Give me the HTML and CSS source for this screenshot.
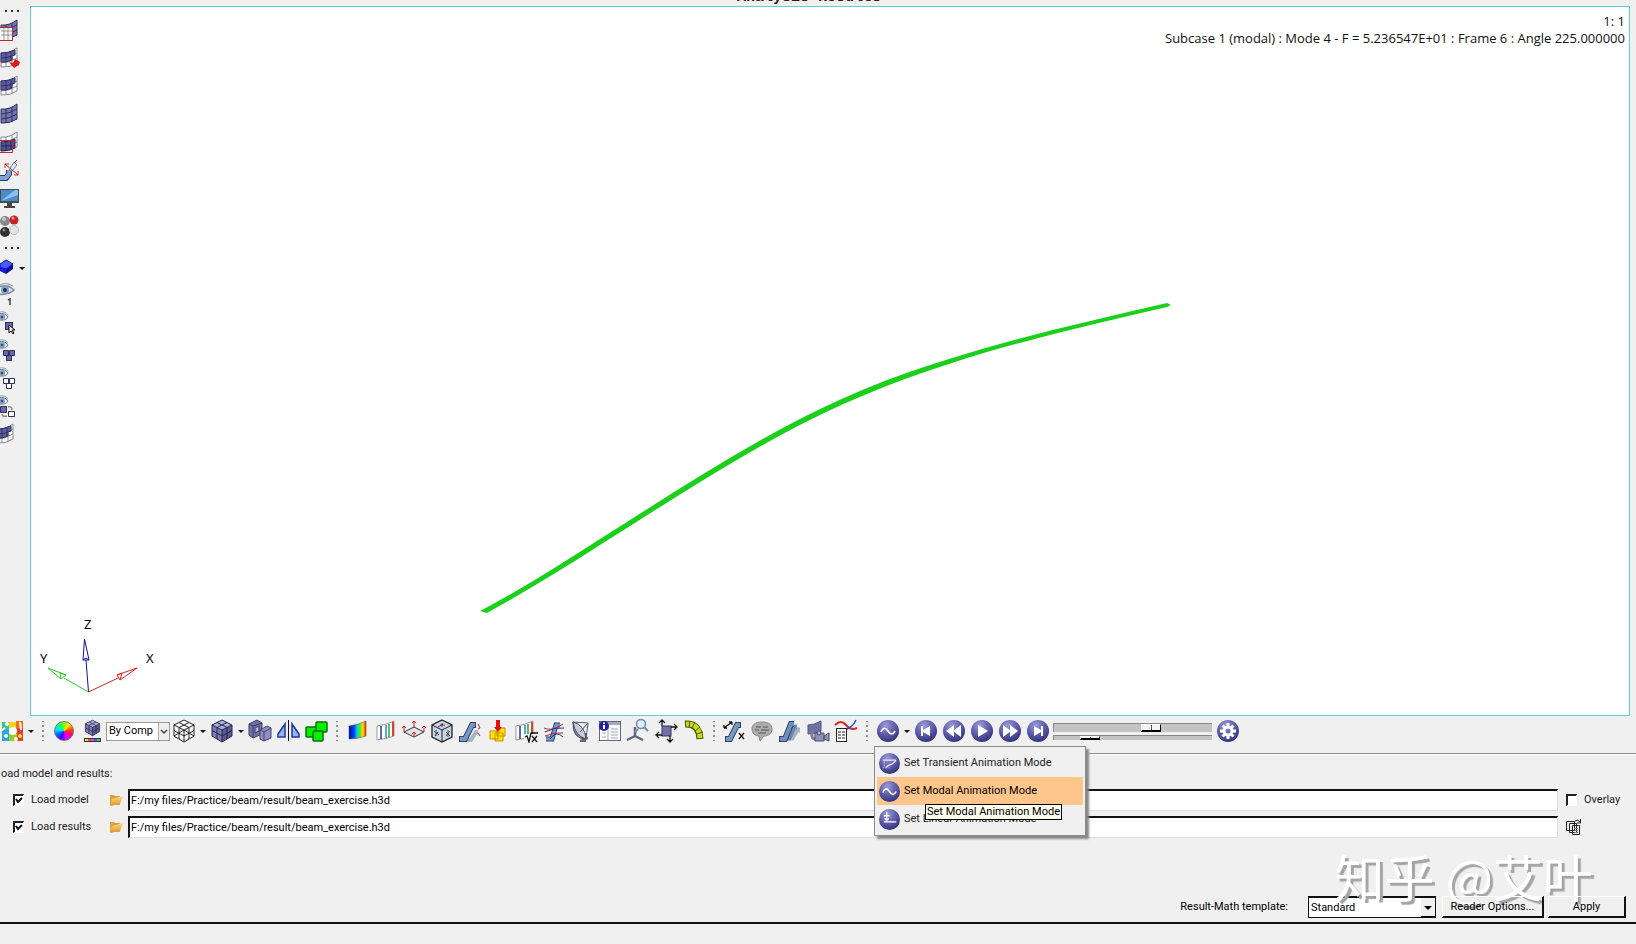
FILE: index.html
```html
<!DOCTYPE html>
<html lang="en">
<head>
<meta charset="utf-8">
<title>Analysis Results</title>
<link rel="stylesheet" href="styles.css">
</head>
<body>
<svg class="sprite" aria-hidden="true">
  <defs>
    <radialGradient id="orb" cx=".4" cy=".25" r=".8"><stop offset="0" stop-color="#9c9cd6"/><stop offset=".5" stop-color="#5f5fae"/><stop offset="1" stop-color="#2e2e76"/></radialGradient>
    <linearGradient id="rainbow" x1="0" x2="1"><stop offset="0" stop-color="#0010a0"/><stop offset=".3" stop-color="#0040ff"/><stop offset=".48" stop-color="#00d8e0"/><stop offset=".64" stop-color="#50e820"/><stop offset=".82" stop-color="#ffe000"/><stop offset="1" stop-color="#f02000"/></linearGradient>
    <linearGradient id="folder" x1="0" y1="0" x2="0" y2="1"><stop offset="0" stop-color="#ffe08a"/><stop offset="1" stop-color="#d99420"/></linearGradient>
  </defs>
  <symbol id="mesh-fill" viewBox="0 0 24 24"><path d="M1 7Q9 8 17 2V17Q9 22 1 21Z" fill="#7474b4" stroke="#30305c"/><path d="M1 12Q9 12 17 7M1 17Q9 17 17 12M6 7V21M12 5V20" fill="none" stroke="#30305c"/></symbol>
  <symbol id="mesh-open" viewBox="0 0 24 24"><path d="M1 7Q9 8 17 2V17Q9 22 1 21Z" fill="#fafafa" stroke="#8a8a94"/><path d="M1 12Q9 12 17 7M1 17Q9 17 17 12M6 7V21M12 5V20" fill="none" stroke="#8a8a94"/></symbol>
  <symbol id="mesh-part" viewBox="0 0 24 24"><use href="#mesh-open"/><path d="M1 7Q8 7 15 4V9L12 10V14L6 16H1Z" fill="#5c5ca4" stroke="#30305c"/><path d="M1 12Q8 12 12 10M6 7V16M11 6V14" fill="none" stroke="#30305c"/></symbol>
  <symbol id="mesh-red-a" viewBox="0 0 24 24"><use href="#mesh-fill"/><path d="M0 10H12V22H0Z" fill="#f6f6f6"/><path d="M1 13H12M1 17H12M4 10V22M8 10V22" stroke="#999"/><path d="M0 9.500H12.500V22.500H0" fill="none" stroke="#c8202c"/></symbol>
  <symbol id="mesh-red-b" viewBox="0 0 24 24"><use href="#mesh-open"/><path d="M1 12Q9 12 15 9V18Q9 21 1 21Z" fill="#505098" stroke="#282850"/><path d="M1 16H15M6 12V21M11 11V20" stroke="#282850"/><path d="M0 10.500H12.500V22.500H0" fill="none" stroke="#d02038"/></symbol>
  <symbol id="mesh-arrow" viewBox="0 0 24 24"><use href="#mesh-part"/><path d="M9 16L13 17 15 13 20 16 19 19 14 22Z" fill="#e01818"/></symbol>
  <symbol id="pipe-red" viewBox="0 0 24 24"><path d="M0 20H6L9 16V12" fill="none" stroke="#28446c" stroke-width="6"/><path d="M0 20H6L9 16V12" fill="none" stroke="#7fa4d0" stroke-width="4"/><path d="M9 12L14 4 17 7 12 13Z" fill="#d8ecfa" stroke="#6c8298"/><path d="M5 6L18 17M5 6H9M5 6V10M18 17H14M18 17V13M14 5L17 2" fill="none" stroke="#d02020"/></symbol>
  <symbol id="monitor" viewBox="0 0 24 24"><rect x="0" y="3" width="19" height="14" fill="#444c58"/><rect x="1" y="4" width="17" height="11" fill="#4b8cc8"/><path d="M1 15L15 4H18V9Z" fill="#8dc0ec"/><path d="M7 17H12V20H15V22H4V20H7Z" fill="#444"/></symbol>
  <symbol id="balls" viewBox="0 0 24 24"><circle cx="5" cy="7" r="5" fill="#888"/><circle cx="14" cy="6" r="4.500" fill="#c82028"/><circle cx="5" cy="18" r="5" fill="#303030"/><circle cx="14" cy="16" r="4.500" fill="#e4e4e4" stroke="#bbb"/><circle cx="13" cy="4" r="1.500" fill="#ff9898"/><circle cx="4" cy="5" r="2" fill="#c4c4c4"/><circle cx="4" cy="16" r="1.500" fill="#888"/></symbol>
  <symbol id="bluebox" viewBox="0 0 24 24"><path d="M0 8L6 4 13 8 6 13 0 11Z" fill="#4a5cff" stroke="#1010a0"/><path d="M0 11V15L6 18V13Z" fill="#1a1ad8"/><path d="M6 13L13 8V13L6 18Z" fill="#0c0c9c"/></symbol>
  <symbol id="eye" viewBox="0 0 24 24"><path d="M-6 10Q4 0 14 9Q6 16 -6 12Z" fill="#e8eef4" stroke="#7b8794" stroke-width="1.500"/><circle cx="5" cy="9" r="4" fill="#7ba2c8"/><circle cx="5" cy="9" r="2" fill="#203048"/><path d="M-2 5Q5 0 13 5" fill="none" stroke="#8a949e"/></symbol>
  <symbol id="eye-one" viewBox="0 0 24 24"><use href="#eye" y="-1"/><path d="M8 18L10 17V23" fill="none" stroke="#444" stroke-width="1.500"/></symbol>
  <symbol id="eye-small" viewBox="0 0 24 24"><path d="M-2 4Q5 2 8 7Q6 11 -1 10" fill="#e8eef4" stroke="#6f7b88"/><circle cx="2" cy="7" r="3" fill="#7f9fc0"/><circle cx="2" cy="7" r="1" fill="#203048"/><path d="M-1 2Q6 1 8 5" fill="none" stroke="#98a2ac"/></symbol>
  <symbol id="eye-pick" viewBox="0 0 24 24"><use href="#eye-small"/><rect x="5.500" y="12.500" width="7" height="7" fill="#6868a8" stroke="#303060"/><path d="M9 15V23L11 21 13 24 14 23 12 20H15Z" fill="#fff" stroke="#000"/></symbol>
  <symbol id="eye-full" viewBox="0 0 24 24"><use href="#eye-small"/><path d="M3.500 12.500h5v5h-5zM9.500 12.500h5v5h-5zM6.500 17.500h5v5h-5z" fill="#6868a8" stroke="#303060"/></symbol>
  <symbol id="eye-empty" viewBox="0 0 24 24"><use href="#eye-small"/><path d="M3.500 12.500h5v5h-5zM9.500 12.500h5v5h-5zM6.500 17.500h5v5h-5z" fill="#fff" stroke="#303060"/></symbol>
  <symbol id="eye-swap" viewBox="0 0 24 24"><use href="#eye-small"/><path d="M.500 12.500h6v6h-6z" fill="#6868a8" stroke="#303060"/><path d="M8.500 17.500h6v5h-6z" fill="#fff" stroke="#303060"/><path d="M8 13Q12 12 12 16M2 20Q2 23 7 22" fill="none" stroke="#888" stroke-width="1.500"/></symbol>
  <symbol id="confetti" viewBox="0 0 24 24"><path d="M1 3H8V10H1Z" fill="#3cc878"/><path d="M8 3H15V9H8Z" fill="#f0d020"/><path d="M15 2H22V9H15Z" fill="#f07018"/><path d="M1 10H8V22H1Z" fill="#28a8e8"/><path d="M15 9H22V22H15Z" fill="#e84028"/><path d="M8 15H16V22H8Z" fill="#98d020"/><circle cx="12" cy="12" r="4" fill="#fff"/><circle cx="6" cy="5" r="2" fill="#fff"/><circle cx="19" cy="17" r="2" fill="#ffe040"/><circle cx="5" cy="17" r="2" fill="#fff"/><circle cx="15" cy="20" r="2" fill="#fff"/><path d="M0 12L4 9M19 3L20 11" stroke="#fff" stroke-width="2"/></symbol>
  <symbol id="cube" viewBox="0 0 24 24"><path d="M12 1L22 6V17L12 23 2 17V6Z" fill="#5a5a90"/><path d="M12 1L22 6 12 11 2 6Z" fill="#b0b0d4"/><path d="M2 6L12 11V23L2 17Z" fill="#7c7cb4"/><path d="M12 1L22 6V17L12 23 2 17V6ZM2 6L12 11 22 6M12 11V23M7 3.500L17 8.500V20M17 3.500L7 8.500V20M2 11.500L12 17 22 11.500" fill="none" stroke="#26264c"/></symbol>
  <symbol id="cube-wire" viewBox="0 0 24 24"><path d="M12 1L22 6V17L12 23 2 17V6Z" fill="#fff"/><path d="M12 1L22 6V17L12 23 2 17V6ZM2 6L12 11 22 6M12 11V23M7 3.500L17 8.500V20M17 3.500L7 8.500V20M2 11.500L12 17 22 11.500M2 17L12 11 22 17" fill="none" stroke="#222"/></symbol>
  <symbol id="cube-bar" viewBox="0 0 24 24"><svg x="4" y="0" width="17" height="18"><use href="#cube" width="17" height="18"/></svg><rect x="4" y="19" width="17" height="4" fill="#333"/><path d="M5 20h3v2H5z" fill="#f0e020"/><path d="M8 20h3v2H8z" fill="#ff4040"/><path d="M11 20h3v2h-3z" fill="#e040e0"/><path d="M14 20h3v2h-3z" fill="#4060ff"/><path d="M17 20h3v2h-3z" fill="#30d060"/></symbol>
  <symbol id="blocks" viewBox="0 0 24 24"><path d="M1 5L9 1 14 4V15L5 19 1 16Z" fill="#7272a8" stroke="#3a3a66"/><path d="M1 5L5 7 14 4M5 7V19" fill="none" stroke="#3a3a66"/><path d="M7 9L11 7V12L7 14Z" fill="#b8b8d8" stroke="#3a3a66"/><path d="M12 11L19 7 23 9V19L16 22 12 20Z" fill="#8e8ec0" stroke="#44446e"/><path d="M12 11L16 13 23 9M16 13V22" fill="none" stroke="#44446e"/></symbol>
  <symbol id="mirror" viewBox="0 0 24 24"><path d="M12.500 1V22" stroke="#111"/><path d="M9 5V18H2V15Z" fill="#94b4ec" stroke="#1c38a0" stroke-width="1.500"/><path d="M16 5V18H23V15Z" fill="#94b4ec" stroke="#1c38a0" stroke-width="1.500"/></symbol>
  <symbol id="green" viewBox="0 0 24 24"><g fill="#00f000" stroke="#087008" stroke-width="1.500"><rect x="2" y="8" width="11" height="10" rx="1"/><rect x="12" y="3" width="11" height="10" rx="1"/><rect x="9" y="12" width="10" height="10" rx="1"/></g></symbol>
  <symbol id="contour" viewBox="0 0 24 24"><path d="M3 7Q12 6 20 2V17Q12 20 3 20Z" fill="url(#rainbow)" stroke="#404040" stroke-width=".5"/></symbol>
  <symbol id="strips" viewBox="0 0 24 24"><path d="M3 7Q12 6 20 2V17Q12 20 3 21Z" fill="#fff" stroke="#999"/><path d="M7 7V20" stroke="#2038a0" stroke-width="1.500"/><path d="M12 6V19" stroke="#2890b0" stroke-width="1.500"/><path d="M15 5V18" stroke="#30a040" stroke-width="1.500"/><path d="M19 3V17" stroke="#e04030" stroke-width="2"/></symbol>
  <symbol id="plane" viewBox="0 0 24 24"><path d="M2 13L12 8 22 13 12 18Z" fill="#e4e4e4" stroke="#333"/><path d="M12 8V2M10 4L12 2 14 4M2 13V7M0 9L2 7 4 9M22 13V7M20 9L22 7 24 9M12 18V13M10 15L12 13 14 15" fill="none" stroke="#d02020"/></symbol>
  <symbol id="tensor" viewBox="0 0 24 24"><path d="M12 1L22 6V18L12 23 2 18V6Z" fill="#c8d4e8" stroke="#222" stroke-width="1.300"/><path d="M2 6L12 11 22 6M12 11V23" fill="none" stroke="#222"/><path d="M10 6H15M12 4V8M4 12L9 16M16 17L20 12" stroke="#d02020"/><path d="M8 8L13 5M5 17L8 13M16 13L20 17" stroke="#1830c0"/><path d="M6 11V17M18 11V18" stroke="#188030"/></symbol>
  <symbol id="pipe-deform" viewBox="0 0 24 24"><path d="M8 21H13L18 13H20" fill="none" stroke="#a8b4c4" stroke-width="4"/><path d="M1 20H7L14 6H18" fill="none" stroke="#2c446c" stroke-width="6"/><path d="M2 20H7L14 6H17" fill="none" stroke="#7898c0" stroke-width="4"/><path d="M20 5L22 9 20 10M20 14L22 17" fill="none" stroke="#d02020"/></symbol>
  <symbol id="load" viewBox="0 0 24 24"><path d="M4 12H12V20H4ZM11 9H19V17H11ZM9 14H17V22H9Z" fill="#ffe600" stroke="#c88c00"/><path d="M10 1H14V8H16L12 13 8 8H10Z" fill="#e01010"/></symbol>
  <symbol id="strips-x" viewBox="0 0 24 24"><use href="#strips" x="-1"/><path d="M10 15H24V24H10Z" fill="#f0f0f0"/><path d="M11 18L13 17 15 23 17 14H24" fill="none" stroke="#111" stroke-width="1.300"/><path d="M18 17L23 23M23 17L18 23" stroke="#111" stroke-width="1.300"/></symbol>
  <symbol id="flow" viewBox="0 0 24 24"><path d="M4 20H10L14 6H18" fill="none" stroke="#2c446c" stroke-width="5"/><path d="M4 20H10L14 6H18" fill="none" stroke="#7898c0" stroke-width="3"/><path d="M2 9Q10 13 21 5M3 17Q12 13 21 14" fill="none" stroke="#d02020"/><path d="M3 13Q12 8 22 9M8 20Q14 11 21 18" fill="none" stroke="#1838b0"/></symbol>
  <symbol id="dish" viewBox="0 0 24 24"><path d="M16 14L15 22H10L18 19" fill="none" stroke="#667" stroke-width="2"/><path d="M3 3Q2 20 16 20Z" fill="#8890a4" stroke="#444c60"/><path d="M3 3Q15 6 16 20Q5 17 3 3Z" fill="#c8ccd8" stroke="#444c60"/><path d="M3 3L18 4 16 20M18 4L10 13" fill="none" stroke="#555c70"/></symbol>
  <symbol id="info" viewBox="0 0 24 24"><rect x="1.500" y="2.500" width="21" height="19" fill="#f8f8f8" stroke="#667"/><path d="M2 3H22V6H2Z" fill="#a4acc0"/><path d="M10 8V21M13 10H20M13 13H20M13 16H20M13 19H20M4 14H8M4 18H8" stroke="#aab"/><circle cx="6" cy="7" r="5" fill="#2020a0"/><path d="M6 6V10M6 3.500V5" stroke="#fff" stroke-width="2"/></symbol>
  <symbol id="probe" viewBox="0 0 24 24"><path d="M9 17V8M9 17L1 21M9 17L17 21" stroke="#5c6884" stroke-width="2.500"/><path d="M12 10L9 13" stroke="#7c8aa4" stroke-width="2"/><circle cx="15" cy="5" r="4.500" fill="#d8f0fa" stroke="#7488a0" stroke-width="1.500"/><path d="M18 8L22 12" stroke="#7488a0" stroke-width="2"/></symbol>
  <symbol id="expand" viewBox="0 0 24 24"><rect x="8" y="7" width="9" height="10" fill="#7070a4" stroke="#34345c"/><path d="M8 7V2M5 4L8 1 11 4M17 8H22M20 5L23 8 20 11M16 17V22M13 20L16 23 19 20M8 16H3M5 13L2 16 5 19" fill="none" stroke="#111" stroke-width="1.300"/></symbol>
  <symbol id="bend" viewBox="0 0 24 24"><path d="M3 5Q17 4 18 20" fill="none" stroke="#505000" stroke-width="7"/><path d="M4 5Q17 4 18 19" fill="none" stroke="#c4dc10" stroke-width="5"/><path d="M8 2L7 8M13 3L10 9M18 8L13 12M21 13L15 15" stroke="#505000"/></symbol>
  <symbol id="pipe-x" viewBox="0 0 24 24"><path d="M3 20H8L15 6H19" fill="none" stroke="#2c446c" stroke-width="6"/><path d="M4 20H8L15 6H18" fill="none" stroke="#7898c0" stroke-width="4"/><path d="M2 9L10 3M2 9V6M2 9H5M10 3H7M10 3V6M17 14L22 20M22 14L17 20" fill="none" stroke="#111" stroke-width="1.300"/></symbol>
  <symbol id="note" viewBox="0 0 24 24"><path d="M12 3C5 3 2 6 2 10S5 17 9 17L10 22 14 17C19 17 22 14 22 10S19 3 12 3Z" fill="#acacac" stroke="#888"/><path d="M6 8H11M13 8H18M5 11H9M11 11H19M8 14H16" stroke="#555"/></symbol>
  <symbol id="pipes" viewBox="0 0 24 24"><path d="M10 19H14L19 11H22" fill="none" stroke="#a8b4c4" stroke-width="5"/><path d="M6 19H11L16 8H19" fill="none" stroke="#6f88aa" stroke-width="5"/><path d="M1 20H7L13 5H16" fill="none" stroke="#2c446c" stroke-width="6"/><path d="M2 20H7L13 5H16" fill="none" stroke="#7090bc" stroke-width="4"/></symbol>
  <symbol id="camera" viewBox="0 0 24 24"><path d="M2 6Q8 6 15 2V12Q9 15 2 15Z" fill="#7070a4" stroke="#55557c"/><path d="M6 12Q5 20 9 20" fill="none" stroke="#7b8098" stroke-width="3"/><path d="M9 14H18V22H9ZM18 17L23 14V22L18 20Z" fill="#9090b4" stroke="#4c4c74"/><circle cx="13" cy="14" r="2" fill="#b4b4cc" stroke="#4c4c74"/></symbol>
  <symbol id="report" viewBox="0 0 24 24"><path d="M1 6Q7 0 12 6T23 9" fill="none" stroke="#e02828" stroke-width="2"/><path d="M9 11Q18 10 22 1" fill="none" stroke="#2848d0" stroke-width="1.500"/><rect x="2.500" y="9.500" width="10" height="13" fill="#fff" stroke="#222"/><path d="M4 13H7M8 13H11M4 16H7M8 16H11M4 19H7M8 19H11" stroke="#222"/></symbol>
  <symbol id="orb-wave" viewBox="0 0 24 24"><circle cx="12" cy="12" r="11" fill="url(#orb)"/><path d="M5 13Q8 6 12 12T19 12" fill="none" stroke="#fff" stroke-width="1.700"/></symbol>
  <symbol id="orb-first" viewBox="0 0 24 24"><circle cx="12" cy="12" r="11" fill="url(#orb)"/><path d="M7 7H9V11L16 7V17L9 13V17H7Z" fill="#fff"/></symbol>
  <symbol id="orb-back" viewBox="0 0 24 24"><circle cx="12" cy="12" r="11" fill="url(#orb)"/><path d="M12 6V18L4 12ZM19 6V18L11 12Z" fill="#fff"/></symbol>
  <symbol id="orb-play" viewBox="0 0 24 24"><circle cx="12" cy="12" r="11" fill="url(#orb)"/><path d="M8 6L18 12 8 18Z" fill="#fff"/></symbol>
  <symbol id="orb-next" viewBox="0 0 24 24"><circle cx="12" cy="12" r="11" fill="url(#orb)"/><path d="M5 6V18L13 12ZM12 6V18L20 12Z" fill="#fff"/></symbol>
  <symbol id="orb-last" viewBox="0 0 24 24"><circle cx="12" cy="12" r="11" fill="url(#orb)"/><path d="M17 7H15V11L8 7V17L15 13V17H17Z" fill="#fff"/></symbol>
  <symbol id="orb-gear" viewBox="0 0 24 24"><circle cx="12" cy="12" r="11" fill="url(#orb)"/><circle cx="12" cy="12" r="4" fill="none" stroke="#fff" stroke-width="3"/><path d="M12 4V7M12 17V20M4 12H7M17 12H20M6.500 6.500L8.500 8.500M15.500 15.500L17.500 17.500M17.500 6.500L15.500 8.500M6.500 17.500L8.500 15.500" stroke="#fff" stroke-width="3"/></symbol>
  <symbol id="orb-transient" viewBox="0 0 24 24"><circle cx="12" cy="12" r="11" fill="url(#orb)"/><path d="M5 8.500H19M8 16L11 14 14 13 19 9" fill="none" stroke="#e8e8ff" stroke-width="1.300"/><path d="M5 16.500H13M6.500 10V16" stroke="#e8e8ff" stroke-dasharray="1 1"/></symbol>
  <symbol id="orb-linear" viewBox="0 0 24 24"><circle cx="12" cy="12" r="11" fill="url(#orb)"/><path d="M9 4V13M6 8H12M6 14.500H19M9 13L7 11M9 13L11 11" fill="none" stroke="#fff" stroke-width="1.500"/></symbol>
  <symbol id="folder-open" viewBox="0 0 16 16"><path d="M2 3H6L7 4H12V13H2Z" fill="#d9a244"/><path d="M4 7L15 4 12 12 2 14Z" fill="url(#folder)"/></symbol>
  <symbol id="copies" viewBox="0 0 16 16"><path d="M.500 2.500h8v9h-8zM3.500 4.500h7v9h-7zM6.500 6.500h7v9h-7z" fill="#f0f0f0" stroke="#222"/><path d="M8 9.500H12M8 11.500H12M8 13.500H12" stroke="#777"/><path d="M9 2Q12 0 14 3M14.500 0V4H11" fill="none" stroke="#222"/></symbol>
</svg>

<header class="title-strip"><span>Analysis Results</span></header>

<main class="workspace">
  <nav class="side-tools" aria-label="Display tools">
    <span class="grip-h"></span>
    <button class="tool" aria-label="Mask elements"><svg><use href="#mesh-red-a"/></svg></button>
    <button class="tool" aria-label="Reverse mask"><svg><use href="#mesh-arrow"/></svg></button>
    <button class="tool" aria-label="Unmask adjacent"><svg><use href="#mesh-part"/></svg></button>
    <button class="tool" aria-label="Unmask all"><svg><use href="#mesh-fill"/></svg></button>
    <button class="tool" aria-label="Mask outside view"><svg><use href="#mesh-red-b"/></svg></button>
    <button class="tool" aria-label="Translate part"><svg><use href="#pipe-red"/></svg></button>
    <button class="tool" aria-label="Screen"><svg><use href="#monitor"/></svg></button>
    <button class="tool" aria-label="Materials"><svg><use href="#balls"/></svg></button>
    <span class="grip-h grip-h--mid"></span>
    <div class="side-pair">
      <button class="tool" aria-label="Entity type"><svg><use href="#bluebox"/></svg></button>
      <button class="drop" aria-label="Choose entity type"></button>
    </div>
    <button class="tool" aria-label="Show one"><svg><use href="#eye-one"/></svg></button>
    <button class="tool" aria-label="Show picked"><svg><use href="#eye-pick"/></svg></button>
    <button class="tool" aria-label="Show all"><svg><use href="#eye-full"/></svg></button>
    <button class="tool" aria-label="Hide all"><svg><use href="#eye-empty"/></svg></button>
    <button class="tool" aria-label="Reverse display"><svg><use href="#eye-swap"/></svg></button>
    <button class="tool" aria-label="Partial mesh"><svg viewBox="4 0 24 24"><use href="#mesh-part" width="24" height="24"/></svg></button>
  </nav>
  <section class="viewport" aria-label="Model view">
    <svg class="scene" viewBox="31 7 1598 708" role="img" aria-label="Beam mode shape">
      <path d="M480 611L484 609C523 588 561 564 600 539C660 501 719 463 779 430C836 399 892 376 949 359C1022 336 1094 320 1167 303L1171 305 1167 307C1094 324 1022 340 949 364C892 382 836 405 779 436C719 469 660 507 600 545C561 570 523 593 487 613Z" fill="#1bd01b"/>
      <g fill="none">
        <path d="M88.500 692L86 660M84.500 639L83 660H89ZM83 660L86 658 89 660" stroke="#1010a8"/>
        <path d="M88.500 692L118 678M137 668L117 675 120 680ZM117 675L122 673 120 680" stroke="#e02020"/>
        <path d="M88.500 692L64 678M48 668L61 679 66 675ZM61 679L60 673 66 675" stroke="#28c828"/>
      </g>
      <g class="axis-label"><text x="84" y="629">Z</text><text x="146" y="663">X</text><text x="40" y="663">Y</text></g>
    </svg>
    <div class="caption"><p>1: 1</p><p>Subcase 1 (modal) : Mode 4 - F = 5.236547E+01 : Frame 6 : Angle 225.000000</p></div>
  </section>
</main>

<div class="toolbar" role="toolbar" aria-label="Results toolbar">
  <button class="tool tool--first" aria-label="Palette"><svg><use href="#confetti"/></svg></button><button class="drop" aria-label="Palette options"></button>
  <span class="grip"></span>
  <button class="tool" aria-label="Colour wheel"><span class="wheel"></span></button>
  <button class="tool" aria-label="Colour mode"><svg><use href="#cube-bar"/></svg></button>
  <select class="comp-select" aria-label="Colour by"><option>By Comp</option></select>
  <button class="tool" aria-label="Wireframe"><svg><use href="#cube-wire"/></svg></button><button class="drop" aria-label="Wireframe options"></button>
  <button class="tool" aria-label="Shaded"><svg><use href="#cube"/></svg></button><button class="drop" aria-label="Shaded options"></button>
  <button class="tool" aria-label="Parts"><svg><use href="#blocks"/></svg></button>
  <button class="tool" aria-label="Mirror"><svg><use href="#mirror"/></svg></button>
  <button class="tool" aria-label="Groups"><svg><use href="#green"/></svg></button>
  <span class="grip"></span>
  <button class="tool" aria-label="Contour"><svg><use href="#contour"/></svg></button>
  <button class="tool" aria-label="Iso"><svg><use href="#strips"/></svg></button>
  <button class="tool" aria-label="Vector"><svg><use href="#plane"/></svg></button>
  <button class="tool" aria-label="Tensor"><svg><use href="#tensor"/></svg></button>
  <button class="tool" aria-label="Deformed"><svg><use href="#pipe-deform"/></svg></button>
  <button class="tool" aria-label="Loads"><svg><use href="#load"/></svg></button>
  <button class="tool" aria-label="Derived results"><svg><use href="#strips-x"/></svg></button>
  <button class="tool" aria-label="Streamlines"><svg><use href="#flow"/></svg></button>
  <button class="tool" aria-label="Tracking"><svg><use href="#dish"/></svg></button>
  <button class="tool" aria-label="Query"><svg><use href="#info"/></svg></button>
  <button class="tool" aria-label="Measure"><svg><use href="#probe"/></svg></button>
  <button class="tool" aria-label="Exploded view"><svg><use href="#expand"/></svg></button>
  <button class="tool" aria-label="Trace"><svg><use href="#bend"/></svg></button>
  <span class="grip grip--tight"></span>
  <button class="tool" aria-label="Distance"><svg><use href="#pipe-x"/></svg></button>
  <button class="tool" aria-label="Note"><svg><use href="#note"/></svg></button>
  <button class="tool" aria-label="Deformed frames"><svg><use href="#pipes"/></svg></button>
  <button class="tool" aria-label="Capture"><svg><use href="#camera"/></svg></button>
  <button class="tool" aria-label="Plot report"><svg><use href="#report"/></svg></button>
  <span class="grip"></span>
  <div class="mode">
    <button class="tool" aria-label="Animation mode"><svg><use href="#orb-wave"/></svg></button><button class="drop" aria-label="Choose animation mode"></button>
    <div class="mode-menu" role="menu">
      <button class="mode-item" role="menuitem"><svg><use href="#orb-transient"/></svg>Set Transient Animation Mode</button>
      <button class="mode-item mode-item--active" role="menuitem"><svg><use href="#orb-wave"/></svg>Set Modal Animation Mode</button>
      <button class="mode-item" role="menuitem"><svg><use href="#orb-linear"/></svg>Set Linear Animation Mode</button>
      <div class="tooltip" role="tooltip">Set Modal Animation Mode</div>
    </div>
  </div>
  <button class="tool" aria-label="First frame"><svg><use href="#orb-first"/></svg></button>
  <button class="tool" aria-label="Rewind"><svg><use href="#orb-back"/></svg></button>
  <button class="tool" aria-label="Play"><svg><use href="#orb-play"/></svg></button>
  <button class="tool" aria-label="Forward"><svg><use href="#orb-next"/></svg></button>
  <button class="tool" aria-label="Last frame"><svg><use href="#orb-last"/></svg></button>
  <div class="sliders">
    <input class="slider" type="range" value="63" aria-label="Animation speed">
    <input class="slider slider--thin" type="range" value="19" aria-label="Current frame">
  </div>
  <button class="tool" aria-label="Animation settings"><svg><use href="#orb-gear"/></svg></button>
</div>

<form class="panel">
  <p class="panel-title">oad model and results:</p>
  <div class="file-row">
    <label class="check check--lead"><input type="checkbox" checked>Load model</label>
    <button type="button" class="browse" aria-label="Browse model"><svg><use href="#folder-open"/></svg></button>
    <input class="path" type="text" aria-label="Model file" value="F:/my files/Practice/beam/result/beam_exercise.h3d">
    <label class="check check--tail"><input type="checkbox">Overlay</label>
  </div>
  <div class="file-row">
    <label class="check check--lead"><input type="checkbox" checked>Load results</label>
    <button type="button" class="browse" aria-label="Browse results"><svg><use href="#folder-open"/></svg></button>
    <input class="path" type="text" aria-label="Results file" value="F:/my files/Practice/beam/result/beam_exercise.h3d">
    <div class="check--tail"><button type="button" class="browse" aria-label="Copy files"><svg><use href="#copies"/></svg></button></div>
  </div>
  <div class="actions">
    <span class="watermark">知乎 @艾叶</span>
    <label for="template">Result-Math template:</label>
    <select id="template" class="template"><option>Standard</option></select>
    <button type="button" class="push push--wide">Reader Options...</button>
    <button type="button" class="push">Apply</button>
  </div>
</form>
</body>
</html>
```
FILE: styles.css
```css
* { box-sizing: border-box; }

body {
  margin: 0;
  min-height: 100vh;
  display: flex;
  flex-direction: column;
  overflow: hidden;
  background: #f0f0f0;
  color: #222;
  font: 11px/16px "Roboto", sans-serif;
}

button, input, select { font: inherit; color: inherit; margin: 0; }
button { padding: 0; border: 0; background: none; white-space: nowrap; }
p { margin: 0; }
.sprite { position: absolute; width: 0; height: 0; }

.title-strip {
  height: 6px;
  padding-right: 18px;
  overflow: hidden;
  display: flex;
  align-items: flex-end;
  justify-content: center;
  background: #f2f0ec;
  font: bold 15px/16px "Liberation Mono", monospace;
}

.workspace { flex: 1; display: flex; padding-right: 6px; }

.side-tools { width: 30px; display: flex; flex-direction: column; align-items: flex-start; }
.tool { width: 28px; height: 28px; display: flex; align-items: center; justify-content: center; }
.tool svg { width: 24px; height: 24px; flex: none; }
.side-tools .tool { width: 24px; justify-content: flex-start; }
.side-pair { display: flex; align-items: center; height: 24px; }
.side-tools .side-pair .tool { width: 17px; overflow: hidden; }

.drop { width: 10px; height: 28px; display: flex; align-items: center; justify-content: center; }
.drop::before { content: ""; border: 3px solid transparent; border-top-color: #111; border-bottom: 0; }

.grip-h { width: 16px; height: 10px; margin-left: 4px; background: radial-gradient(circle, #333 1px, transparent 1px) center / 6px 10px; }
.grip-h--mid { height: 16px; background-size: 6px 16px; }
.grip { width: 14px; height: 20px; background: radial-gradient(circle, #333 1px, transparent 1px) center / 14px 5px; }
.grip--tight { width: 12px; background-size: 12px 5px; }

.viewport { flex: 1; position: relative; display: flex; min-width: 0; background: #fff; border: 1px solid #5cd3d0; }
.scene { width: 100%; height: 100%; position: absolute; }
.axis-label { font: 13px "Noto Sans", sans-serif; fill: #000; }
.caption { flex: 1; position: relative; padding: 6px 4px 0 0; text-align: right; color: #111; font: 13px/17px "Open Sans", "Noto Sans", sans-serif; }

.toolbar { display: flex; align-items: center; padding: 1px 0 8px; }
.toolbar > *, .mode > .tool, .mode > .drop { flex: none; }
.tool--first { width: 26px; }
.wheel { width: 20px; height: 20px; border-radius: 50%; border: 1px solid #777; background: conic-gradient(#80ff00, #ffe000, #ff4000, #ff0080, #e000ff, #4000ff, #0060ff, #00e0ff, #00ff80, #80ff00); }
.comp-select {
  width: 64px; height: 19px; padding: 0 0 0 2px; border: 1px solid #999; border-radius: 0; appearance: none; color: #000;
  background: #fff url("data:image/svg+xml,%3Csvg xmlns='http://www.w3.org/2000/svg' width='11' height='17'%3E%3Cpath d='M0 0h11v17H0z' fill='%23eee'/%3E%3Cpath d='M.5 0v17' stroke='%23aaa'/%3E%3Cpath d='M3 7l3 3 3-3' fill='none' stroke='%23444' stroke-width='1.500'/%3E%3C/svg%3E") right / 11px 17px no-repeat;
}

.mode { position: relative; display: flex; }
.mode-menu {
  position: absolute; z-index: 2; top: 29px; left: 0; width: 212px; padding: 2px;
  background: #f0f0f0; border: 1px solid #8a8a8a; box-shadow: 3px 3px 2px #888;
}
.mode-item { width: 100%; height: 28px; display: flex; align-items: center; gap: 3px; padding-left: 1px; text-align: left; }
.mode-item svg { width: 23px; height: 23px; }
.mode-item--active { background: #ffc68c; color: #000; }
.tooltip { position: absolute; top: 57px; left: 50px; padding: 0 1px; line-height: 14px; white-space: nowrap; background: #fffff0; border: 1px solid #000; color: #000; }

.sliders { width: 162px; padding: 0 2px 0 1px; display: flex; flex-direction: column; gap: 3px; }
.slider { appearance: none; width: 100%; height: 9px; background: #c4c4c4; border-top: 1px solid #888; border-left: 1px solid #888; }
.slider::-webkit-slider-thumb { appearance: none; width: 20px; height: 8px; background: linear-gradient(90deg, transparent 9px, #555 9px, #555 10px, transparent 10px) #f4f4f4; border: 1px solid #fff; border-right-color: #000; border-bottom: 2px solid #000; }
.slider--thin { height: 5px; }
.slider--thin::-webkit-slider-thumb { height: 4px; }

.panel { display: flex; flex-direction: column; gap: 5px; padding: 12px 0 20px; border-top: 1px solid #8c8c8c; box-shadow: inset 0 1px #fff; }
.panel-title { padding: 0 1px 2px; }
.file-row { display: flex; align-items: center; height: 22px; }
.check { display: flex; align-items: center; gap: 7px; }
.check--lead { width: 108px; padding-left: 13px; }
.check--tail { width: 78px; padding-left: 8px; }
.check input {
  appearance: none; width: 11px; height: 12px; background: #fff;
  border: 1px solid #fff; border-top: 2px solid #222; border-left: 2px solid #222;
}
.check input:checked { background: #fff url("data:image/svg+xml,%3Csvg xmlns='http://www.w3.org/2000/svg' width='8' height='9'%3E%3Cpath d='M1 3l2 3 4-4' fill='none' stroke='%23111' stroke-width='2'/%3E%3C/svg%3E") no-repeat; }
.browse { width: 20px; display: flex; }
.browse svg { width: 16px; height: 16px; }
.path { flex: 1; min-width: 0; height: 22px; padding: 0 1px; background: #fff; color: #000; border: 1px solid #ddd; border-top: 2px solid #111; border-left: 2px solid #111; }

.actions { position: relative; display: flex; justify-content: flex-end; align-items: center; margin-top: 53px; padding: 0 10px 4px 0; border-bottom: 2px solid #111; color: #000; }
.template {
  width: 128px; height: 22px; margin: 0 6px 0 20px; padding: 0 2px; border: 1px solid #111; border-top-width: 2px; border-radius: 0; appearance: none;
  background: #fff url("data:image/svg+xml,%3Csvg xmlns='http://www.w3.org/2000/svg' width='14' height='19'%3E%3Cpath d='M0 0h14v19H0z' fill='%23f0f0f0'/%3E%3Cpath d='M3 8h8l-4 4z'/%3E%3Cpath d='M0 18.500h14' stroke='%23000'/%3E%3C/svg%3E") right / 14px 19px no-repeat;
}
.push { position: relative; width: 78px; height: 22px; border: 1px solid #fff; border-right: 2px solid #111; border-bottom: 2px solid #111; }
.push--wide { width: 102px; margin-right: 4px; }
.watermark {
  position: absolute; right: 43px; bottom: 17px; pointer-events: none; white-space: nowrap;
  font: 400 50px/60px "Noto Sans CJK SC", sans-serif; color: #fff; text-shadow: 3px 3px 1px #a4a4a4;
}
```
